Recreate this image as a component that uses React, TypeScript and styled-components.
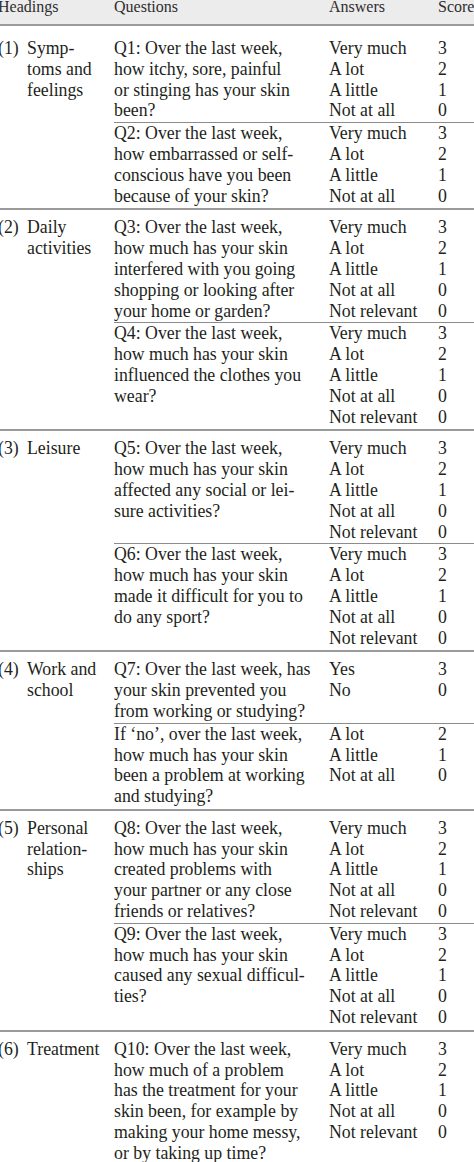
import React from "react";
import styled, { createGlobalStyle } from "styled-components";

const GlobalStyle = createGlobalStyle`
  html, body { margin: 0; padding: 0; background: #ffffff; }
  body {
    font-family: "Liberation Serif", "Times New Roman", serif;
    color: #231f20;
    overflow: hidden;
  }
`;

const LINE = 20.8;
const COLS = "116px 215px 109px 1fr";

const Table = styled.div`
  width: 480px;
  margin-left: -2px;
  font-size: 17.8px;
`;

const HeaderRow = styled.div`
  display: grid;
  grid-template-columns: ${COLS};
  height: 24px;
  background: #ececec;
  border-bottom: 2px solid #9a9a9a;
  font-size: 16px;
  line-height: 13px;
  color: #2e2e2e;
  white-space: nowrap;
`;

const HeaderCell = styled.div``;

const Group = styled.div<{ $first?: boolean; $last?: boolean }>`
  display: grid;
  grid-template-columns: 116px 1fr;
  padding-top: ${(p) => (p.$first ? 12 : 7)}px;
  padding-bottom: 2px;
  border-bottom: ${(p) => (p.$last ? "none" : "2px solid #9a9a9a")};
  line-height: ${LINE}px;
  white-space: nowrap;
`;

const Heading = styled.div`
  display: flex;
  align-items: flex-start;
`;

const HeadNum = styled.span`
  flex: 0 0 29px;
`;

const HeadText = styled.div`
  display: flex;
  flex-direction: column;
`;

const Blocks = styled.div`
  display: flex;
  flex-direction: column;
`;

const Block = styled.div<{ $sep?: boolean }>`
  display: grid;
  grid-template-columns: 215px 109px 1fr;
  padding-bottom: ${(p) => (p.$sep ? 1 : 0)}px;
  border-bottom: ${(p) => (p.$sep ? "1px solid #8c8c8c" : "none")};
`;

const Lines = styled.div`
  display: flex;
  flex-direction: column;
`;

const Score = styled.div`
  display: flex;
  flex-direction: column;
`;

type Q = { lines: string[]; answers: [string, number][] };
type G = { num: string; head: string[]; qs: Q[] };

const FOUR: [string, number][] = [
  ["Very much", 3],
  ["A lot", 2],
  ["A little", 1],
  ["Not at all", 0],
];
const FIVE: [string, number][] = [...FOUR, ["Not relevant", 0]];

const groups: G[] = [
  {
    num: "(1)",
    head: ["Symp-", "toms and", "feelings"],
    qs: [
      {
        lines: ["Q1: Over the last week,", "how itchy, sore, painful", "or stinging has your skin", "been?"],
        answers: FOUR,
      },
      {
        lines: ["Q2: Over the last week,", "how embarrassed or self-", "conscious have you been", "because of your skin?"],
        answers: FOUR,
      },
    ],
  },
  {
    num: "(2)",
    head: ["Daily", "activities"],
    qs: [
      {
        lines: [
          "Q3: Over the last week,",
          "how much has your skin",
          "interfered with you going",
          "shopping or looking after",
          "your home or garden?",
        ],
        answers: FIVE,
      },
      {
        lines: ["Q4: Over the last week,", "how much has your skin", "influenced the clothes you", "wear?"],
        answers: FIVE,
      },
    ],
  },
  {
    num: "(3)",
    head: ["Leisure"],
    qs: [
      {
        lines: ["Q5: Over the last week,", "how much has your skin", "affected any social or lei-", "sure activities?"],
        answers: FIVE,
      },
      {
        lines: ["Q6: Over the last week,", "how much has your skin", "made it difficult for you to", "do any sport?"],
        answers: FIVE,
      },
    ],
  },
  {
    num: "(4)",
    head: ["Work and", "school"],
    qs: [
      {
        lines: ["Q7: Over the last week, has", "your skin prevented you", "from working or studying?"],
        answers: [
          ["Yes", 3],
          ["No", 0],
        ],
      },
      {
        lines: ["If \u2018no\u2019, over the last week,", "how much has your skin", "been a problem at working", "and studying?"],
        answers: [
          ["A lot", 2],
          ["A little", 1],
          ["Not at all", 0],
        ],
      },
    ],
  },
  {
    num: "(5)",
    head: ["Personal", "relation-", "ships"],
    qs: [
      {
        lines: [
          "Q8: Over the last week,",
          "how much has your skin",
          "created problems with",
          "your partner or any close",
          "friends or relatives?",
        ],
        answers: FIVE,
      },
      {
        lines: ["Q9: Over the last week,", "how much has your skin", "caused any sexual difficul-", "ties?"],
        answers: FIVE,
      },
    ],
  },
  {
    num: "(6)",
    head: ["Treatment"],
    qs: [
      {
        lines: [
          "Q10: Over the last week,",
          "how much of a problem",
          "has the treatment for your",
          "skin been, for example by",
          "making your home messy,",
          "or by taking up time?",
        ],
        answers: FIVE,
      },
    ],
  },
];

export default function App() {
  return (
    <>
      <GlobalStyle />
      <Table>
        <HeaderRow>
          <HeaderCell>Headings</HeaderCell>
          <HeaderCell>Questions</HeaderCell>
          <HeaderCell>Answers</HeaderCell>
          <HeaderCell>Score</HeaderCell>
        </HeaderRow>
        {groups.map((g, gi) => (
          <Group key={g.num} $first={gi === 0} $last={gi === groups.length - 1}>
            <Heading>
              <HeadNum>{g.num}</HeadNum>
              <HeadText>
                {g.head.map((h) => (
                  <span key={h}>{h}</span>
                ))}
              </HeadText>
            </Heading>
            <Blocks>
              {g.qs.map((q, qi) => (
                <Block key={qi} $sep={qi < g.qs.length - 1}>
                  <Lines>
                    {q.lines.map((l, li) => (
                      <span key={li}>{l}</span>
                    ))}
                  </Lines>
                  <Lines>
                    {q.answers.map(([a], ai) => (
                      <span key={ai}>{a}</span>
                    ))}
                  </Lines>
                  <Score>
                    {q.answers.map(([, s], si) => (
                      <span key={si}>{s}</span>
                    ))}
                  </Score>
                </Block>
              ))}
            </Blocks>
          </Group>
        ))}
      </Table>
    </>
  );
}
